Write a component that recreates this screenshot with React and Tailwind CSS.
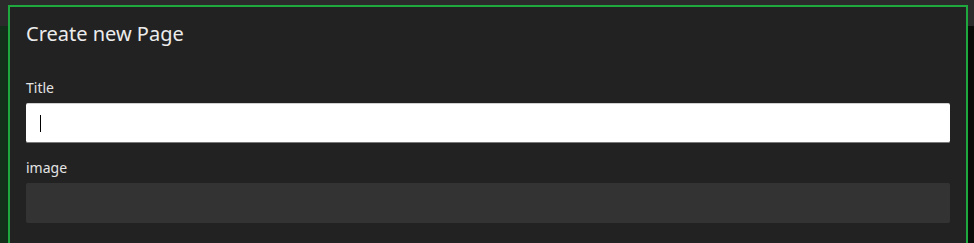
import React from 'react';

const Field = ({ label, children }) => (
    <div className="flex flex-col">
        <label className="text-[14px] leading-5 text-[#e4e4e4] mb-[5px]">{label}</label>
        {children}
    </div>
);

const App = () => {
    return (
        <div
            className="relative w-[974px] h-[243px] overflow-hidden bg-[#0a0f0c]"
            style={{ fontFamily: '"Noto Sans", "Open Sans", sans-serif' }}
        >
            {/* app header behind the modal */}
            <div className="h-[26px] bg-[#2b2b2b]" />
            <div className="h-[217px] bg-gradient-to-r from-[#13301a] via-[#070b08] to-[#0a0c0a]" />

            {/* Modal */}
            <div className="absolute left-2 top-[5px] w-[960px] h-[260px] border-2 border-[#1fa83d] bg-[#222222] px-4 pt-[13px]">
                <h2 className="text-[20px] leading-7 text-[#ececec] font-normal">Create new Page</h2>

                <div className="mt-[30px] flex flex-col gap-[15px]">
                    <Field label="Title">
                        <div className="h-10 rounded-[2px] bg-white border-t border-t-[#d0d0d0] border-b border-b-[#7a7a7a] flex items-center px-[14px]">
                            <span className="w-px h-[17px] bg-black" />
                        </div>
                    </Field>
                    <Field label="image">
                        <div className="h-10 rounded-[2px] bg-[#333333]" />
                    </Field>
                </div>
            </div>
        </div>
    );
};

export default App;
